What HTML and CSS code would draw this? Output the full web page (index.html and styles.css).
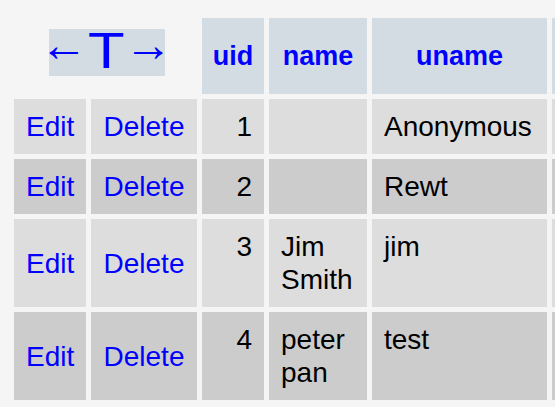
FILE: index.html
```html
<!DOCTYPE html>
<html>
<head>
<meta charset="utf-8">
<link rel="stylesheet" href="styles.css">
</head>
<body>
<table class="grid">
  <colgroup>
    <col class="c-edit">
    <col class="c-del">
    <col class="c-uid">
    <col class="c-name">
    <col class="c-uname">
    <col class="c-pass">
  </colgroup>
  <tr class="head">
    <th class="arrows" colspan="2"><span class="tbox"><span class="arr">←</span><span class="tee">T</span><span class="arr">→</span></span></th>
    <th><a href="#">uid</a></th>
    <th><a href="#">name</a></th>
    <th><a href="#">uname</a></th>
    <th></th>
  </tr>
  <tr class="odd">
    <td class="act"><a href="#">Edit</a></td>
    <td class="act"><a href="#">Delete</a></td>
    <td class="num">1</td>
    <td></td>
    <td>Anonymous</td>
    <td></td>
  </tr>
  <tr class="even">
    <td class="act"><a href="#">Edit</a></td>
    <td class="act"><a href="#">Delete</a></td>
    <td class="num">2</td>
    <td></td>
    <td>Rewt</td>
    <td></td>
  </tr>
  <tr class="odd">
    <td class="act"><a href="#">Edit</a></td>
    <td class="act"><a href="#">Delete</a></td>
    <td class="num">3</td>
    <td>Jim Smith</td>
    <td>jim</td>
    <td></td>
  </tr>
  <tr class="even">
    <td class="act"><a href="#">Edit</a></td>
    <td class="act"><a href="#">Delete</a></td>
    <td class="num">4</td>
    <td>peter pan</td>
    <td>test</td>
    <td></td>
  </tr>
</table>
</body>
</html>
```
FILE: styles.css
```css
html, body {
  margin: 0;
  background: #f5f5f5;
  overflow: hidden;
}
body {
  padding: 13px 0 0 9px;
  font-family: "Liberation Sans", Arial, sans-serif;
  font-size: 28px;
  line-height: 33px;
  color: #000;
}
a {
  color: #0000ff;
  text-decoration: none;
}
.grid {
  border-collapse: separate;
  border-spacing: 5px;
  table-layout: fixed;
  width: 748px;
}
.c-edit { width: 72px; }
.c-del { width: 106px; }
.c-uid { width: 62px; }
.c-name { width: 98px; }
.c-uname { width: 175px; }
.c-pass { width: 200px; }
.head { height: 76px; }
th {
  background: #d3dce3;
  font-size: 27px;
  font-weight: bold;
  padding: 0 6px;
  vertical-align: middle;
  text-align: center;
  white-space: nowrap;
}
th.arrows {
  background: transparent;
  vertical-align: top;
  padding: 11px 0 0 3px;
  font-weight: normal;
}
.tbox {
  display: inline-flex;
  align-items: center;
  justify-content: center;
  width: 116px;
  height: 47px;
  padding-right: 2px;
  box-sizing: border-box;
  background: #d3dce3;
  color: #0000ff;
  white-space: nowrap;
}
.arr {
  display: inline-block;
  font-size: 48px;
  line-height: 47px;
  transform: translateY(-8px);
}
.tee {
  display: inline-block;
  font-size: 50px;
  line-height: 47px;
  margin: 0 3px;
  transform: scaleX(1.2) translateY(-1px);
}
td {
  padding: 11px 12px;
  vertical-align: top;
  text-align: left;
}
td.act {
  vertical-align: middle;
  text-align: center;
}
td.num {
  text-align: right;
}
.odd td { background: #dddddd; }
.even td { background: #cccccc; }
```
